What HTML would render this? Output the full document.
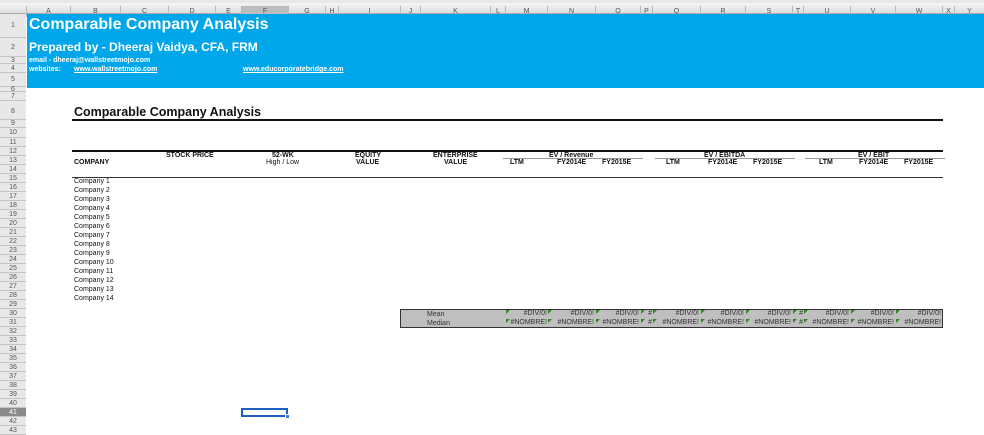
<!DOCTYPE html>
<html><head><meta charset="utf-8"><style>
*{margin:0;padding:0;box-sizing:border-box}
body{width:984px;height:432px;overflow:hidden;background:#fff;font-family:"Liberation Sans",Arial,sans-serif;position:relative}
.a{position:absolute;white-space:nowrap}
#ch{position:absolute;left:0;top:0;width:984px;height:14px;background:linear-gradient(#f4f4f4,#dedede);border-bottom:1px solid #aaa;border-top:3px solid #e8e8e8}
.c{position:absolute;top:3px;height:11px;border-left:1px solid #b8b8b8;font-size:7px;color:#555;text-align:center;line-height:11px}
#rh{position:absolute;left:0;top:14px;width:26px;height:418px;background:#e6e6e6;border-right:1px solid #aaa}
.r{position:absolute;left:0;width:26px;border-bottom:1px solid #c4c4c4;font-size:7px;color:#555;text-align:center;background:#e8e8e8}
.t{font-size:7px;color:#111;line-height:8px}
.b{font-weight:bold}
.m{position:absolute;font-size:7px;color:#333;text-align:right;white-space:nowrap;line-height:9px}
.m:before{content:"";position:absolute;left:1px;top:1px;border-top:4px solid #2a8a1a;border-right:4px solid transparent}
</style></head><body>
<div id="ch">
<div class="c" style="left:26px;width:44px">A</div><div class="c" style="left:70px;width:50px">B</div><div class="c" style="left:120px;width:48px">C</div><div class="c" style="left:168px;width:47px">D</div><div class="c" style="left:215px;width:26px">E</div><div class="c" style="left:241px;width:47px;background:#bdbdbd">F</div><div class="c" style="left:288px;width:37px">G</div><div class="c" style="left:325px;width:13px">H</div><div class="c" style="left:338px;width:62px">I</div><div class="c" style="left:400px;width:20px">J</div><div class="c" style="left:420px;width:70px">K</div><div class="c" style="left:490px;width:15px">L</div><div class="c" style="left:505px;width:42px">M</div><div class="c" style="left:547px;width:48px">N</div><div class="c" style="left:595px;width:45px">O</div><div class="c" style="left:640px;width:12px">P</div><div class="c" style="left:652px;width:48px">Q</div><div class="c" style="left:700px;width:45px">R</div><div class="c" style="left:745px;width:47px">S</div><div class="c" style="left:792px;width:11px">T</div><div class="c" style="left:803px;width:47px">U</div><div class="c" style="left:850px;width:45px">V</div><div class="c" style="left:895px;width:47px">W</div><div class="c" style="left:942px;width:12px">X</div><div class="c" style="left:954px;width:30px">Y</div>
</div>
<div id="rh"></div>
<div class="r" style="top:14px;height:24px;line-height:24px">1</div>
<div class="r" style="top:38px;height:19px;line-height:19px">2</div>
<div class="r" style="top:57px;height:7px;line-height:7px">3</div>
<div class="r" style="top:64px;height:9px;line-height:9px">4</div>
<div class="r" style="top:73px;height:14px;line-height:14px">5</div>
<div class="r" style="top:87px;height:5px;line-height:5px">6</div>
<div class="r" style="top:92px;height:9px;line-height:9px">7</div>
<div class="r" style="top:101px;height:19px;line-height:22px">8</div>
<div class="r" style="top:120px;height:8px;line-height:8px">9</div>
<div class="r" style="top:128px;height:10px;line-height:10px">10</div>
<div class="r" style="top:138px;height:9px;line-height:9px">11</div><div class="r" style="top:147px;height:9px;line-height:9px">12</div><div class="r" style="top:156px;height:9px;line-height:9px">13</div><div class="r" style="top:165px;height:9px;line-height:9px">14</div><div class="r" style="top:174px;height:9px;line-height:9px">15</div><div class="r" style="top:183px;height:9px;line-height:9px">16</div><div class="r" style="top:192px;height:9px;line-height:9px">17</div><div class="r" style="top:201px;height:9px;line-height:9px">18</div><div class="r" style="top:210px;height:9px;line-height:9px">19</div><div class="r" style="top:219px;height:9px;line-height:9px">20</div><div class="r" style="top:228px;height:9px;line-height:9px">21</div><div class="r" style="top:237px;height:9px;line-height:9px">22</div><div class="r" style="top:246px;height:9px;line-height:9px">23</div><div class="r" style="top:255px;height:9px;line-height:9px">24</div><div class="r" style="top:264px;height:9px;line-height:9px">25</div><div class="r" style="top:273px;height:9px;line-height:9px">26</div><div class="r" style="top:282px;height:9px;line-height:9px">27</div><div class="r" style="top:291px;height:9px;line-height:9px">28</div><div class="r" style="top:300px;height:9px;line-height:9px">29</div><div class="r" style="top:309px;height:9px;line-height:9px">30</div><div class="r" style="top:318px;height:9px;line-height:9px">31</div><div class="r" style="top:327px;height:9px;line-height:9px">32</div><div class="r" style="top:336px;height:9px;line-height:9px">33</div><div class="r" style="top:345px;height:9px;line-height:9px">34</div><div class="r" style="top:354px;height:9px;line-height:9px">35</div><div class="r" style="top:363px;height:9px;line-height:9px">36</div><div class="r" style="top:372px;height:9px;line-height:9px">37</div><div class="r" style="top:381px;height:9px;line-height:9px">38</div><div class="r" style="top:390px;height:9px;line-height:9px">39</div><div class="r" style="top:399px;height:9px;line-height:9px">40</div><div class="r" style="top:408px;height:9px;line-height:9px;background:#8a8a8a;color:#fff">41</div><div class="r" style="top:417px;height:9px;line-height:9px">42</div><div class="r" style="top:426px;height:9px;line-height:9px">43</div>

<div class="a" style="left:27px;top:14px;width:957px;height:74px;background:#00a6ea"></div>
<div class="a b" style="left:29px;top:16px;font-size:16px;color:#fff">Comparable Company Analysis</div>
<div class="a b" style="left:29px;top:40px;font-size:12px;color:#fff">Prepared by - Dheeraj Vaidya, CFA, FRM</div>
<div class="a b" style="left:29px;top:57px;font-size:7px;color:#fff">email - dheeraj@wallstreetmojo.com</div>
<div class="a b" style="left:29px;top:66px;font-size:7px;color:#fff">websites:</div>
<div class="a b" style="left:74px;top:66px;font-size:7px;color:#fff;text-decoration:underline">www.wallstreetmojo.com</div>
<div class="a b" style="left:243px;top:66px;font-size:7px;color:#fff;text-decoration:underline">www.educorporatebridge.com</div>

<div class="a b" style="left:74px;top:105px;font-size:12.5px;color:#111">Comparable Company Analysis</div>
<div class="a" style="left:72px;top:119px;width:871px;height:2px;background:#111"></div>
<div class="a" style="left:72px;top:150px;width:871px;height:2px;background:#111"></div>
<div class="a" style="left:72px;top:177px;width:871px;height:1px;background:#333"></div>

<div class="a t b" style="left:74px;top:159px">COMPANY</div>
<div class="a t b" style="left:166px;top:152px">STOCK PRICE</div>
<div class="a t b" style="left:272px;top:152px">52-WK</div>
<div class="a t" style="left:266px;top:159px">High / Low</div>
<div class="a t b" style="left:355px;top:152px">EQUITY</div>
<div class="a t b" style="left:356px;top:159px">VALUE</div>
<div class="a t b" style="left:433px;top:152px">ENTERPRISE</div>
<div class="a t b" style="left:444px;top:159px">VALUE</div>
<div class="a t b" style="left:549px;top:152px">EV / Revenue</div>
<div class="a" style="left:503px;top:158px;width:140px;height:1px;background:#999"></div>
<div class="a t b" style="left:510px;top:159px">LTM</div><div class="a t b" style="left:557px;top:159px">FY2014E</div><div class="a t b" style="left:602px;top:159px">FY2015E</div>
<div class="a t b" style="left:704px;top:152px">EV / EBITDA</div>
<div class="a" style="left:655px;top:158px;width:140px;height:1px;background:#999"></div>
<div class="a t b" style="left:666px;top:159px">LTM</div><div class="a t b" style="left:708px;top:159px">FY2014E</div><div class="a t b" style="left:753px;top:159px">FY2015E</div>
<div class="a t b" style="left:858px;top:152px">EV / EBIT</div>
<div class="a" style="left:805px;top:158px;width:140px;height:1px;background:#999"></div>
<div class="a t b" style="left:819px;top:159px">LTM</div><div class="a t b" style="left:859px;top:159px">FY2014E</div><div class="a t b" style="left:904px;top:159px">FY2015E</div>

<div class="a t" style="left:74px;top:177px;line-height:9px">Company 1<br>Company 2<br>Company 3<br>Company 4<br>Company 5<br>Company 6<br>Company 7<br>Company 8<br>Company 9<br>Company 10<br>Company 11<br>Company 12<br>Company 13<br>Company 14</div>

<div class="a" style="left:400px;top:309px;width:543px;height:19px;background:#bfbfbf;border:1px solid #333"></div>
<div class="a t" style="left:427px;top:310px;line-height:9px;color:#333">Mean<br>Median</div>
<div class="m" style="left:505px;top:309px;width:42px">#DIV/0!</div><div class="m" style="left:547px;top:309px;width:47px">#DIV/0!</div><div class="m" style="left:595px;top:309px;width:44px">#DIV/0!</div><div class="m" style="left:640px;top:309px;width:12px">#</div><div class="m" style="left:652px;top:309px;width:47px">#DIV/0!</div><div class="m" style="left:700px;top:309px;width:44px">#DIV/0!</div><div class="m" style="left:745px;top:309px;width:46px">#DIV/0!</div><div class="m" style="left:792px;top:309px;width:11px">#</div><div class="m" style="left:803px;top:309px;width:46px">#DIV/0!</div><div class="m" style="left:850px;top:309px;width:44px">#DIV/0!</div><div class="m" style="left:895px;top:309px;width:46px">#DIV/0!</div>
<div class="m" style="left:505px;top:318px;width:42px">#NOMBRE!</div><div class="m" style="left:547px;top:318px;width:47px">#NOMBRE!</div><div class="m" style="left:595px;top:318px;width:44px">#NOMBRE!</div><div class="m" style="left:640px;top:318px;width:12px">#</div><div class="m" style="left:652px;top:318px;width:47px">#NOMBRE!</div><div class="m" style="left:700px;top:318px;width:44px">#NOMBRE!</div><div class="m" style="left:745px;top:318px;width:46px">#NOMBRE!</div><div class="m" style="left:792px;top:318px;width:11px">#</div><div class="m" style="left:803px;top:318px;width:46px">#NOMBRE!</div><div class="m" style="left:850px;top:318px;width:44px">#NOMBRE!</div><div class="m" style="left:895px;top:318px;width:46px">#NOMBRE!</div>

<div class="a" style="left:241px;top:408px;width:47px;height:9px;border:2px solid #1f5fbf"></div>
<div class="a" style="left:285px;top:414px;width:5px;height:5px;background:#3a7fe0;border:1px solid #fff"></div>
</body></html>
